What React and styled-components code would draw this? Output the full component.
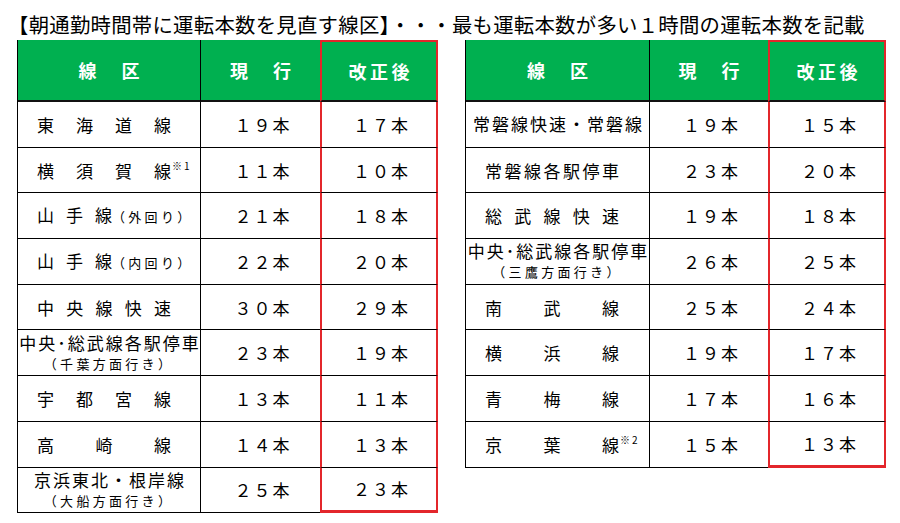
import React from 'react';
import styled, { createGlobalStyle } from 'styled-components';

const GlobalStyle = createGlobalStyle`
  body {
    margin: 0;
    background: #fff;
    color: #000;
    font-family: "Noto Sans CJK JP", "Noto Sans", sans-serif;
  }
`

const Page = styled.div`
  width: 900px;
  height: 523px;
  overflow: hidden;
`

const Title = styled.h1`
  box-sizing: border-box;
  height: 40px;
  margin: 0;
  padding: 12px 0 0 8px;
  font-size: 20.4px;
  font-weight: 400;
  letter-spacing: 0.25px;
  line-height: 24px;
  white-space: nowrap;
`

const Tables = styled.div`
  display: flex;
  align-items: flex-start;
  gap: 27px;
  padding-left: 17px;
`

const Grid = styled.div`
  display: grid;
  grid-template-columns: ${p => p.$cols};
  grid-template-rows: 62px;
  grid-auto-rows: 45.7px;
  border-left: 1px solid #000;
`

const RED = '#e3262b';

const Cell = styled.div`
  box-sizing: border-box;
  display: flex;
  flex-direction: column;
  justify-content: center;
  align-items: ${p => (p.$spread ? 'flex-start' : 'center')};
  padding-left: ${p => (p.$spread ? '19px' : '0')};
  white-space: nowrap;
  border-bottom: ${p =>
    p.$col === 2 && p.$lastRow ? `3px solid ${RED}` : p.$head ? '2px solid #111' : '1px solid #000'};
  border-right: ${p => (p.$col === 0 ? '1px solid #000' : p.$col === 2 ? `2px solid ${RED}` : 'none')};
  border-left: ${p => (p.$col === 2 ? `2px solid ${RED}` : 'none')};
  border-top: ${p => (p.$col === 2 && p.$head ? `2px solid ${RED}` : 'none')};
  background: ${p => (p.$head ? '#00b050' : '#fff')};
`

const HeadText = styled.span`
  color: #fff;
  font-weight: 700;
  font-size: 18px;
  letter-spacing: 3.5px;
  padding-left: 3.5px;
`

const NumText = styled.span`
  font-size: 17px;
  letter-spacing: 2px;
  padding-left: 5px;
`

const NameText = styled.span`
  font-size: 17px;
  letter-spacing: 2px;
  line-height: 22px;
  padding-left: 2px;
`

const SubText = styled.span`
  font-size: 13px;
  letter-spacing: 3.3px;
  line-height: ${p => (p.$inline ? '21px' : '20px')};
`

const Spread = styled.div`
  display: flex;
  justify-content: ${p => (p.$gap ? 'flex-start' : 'space-between')};
  align-items: baseline;
  gap: ${p => p.$gap || 0}px;
  width: ${p => p.$width}px;
  font-size: 17px;
  line-height: 21px;
`

const Char = styled.span`
  position: relative;
`

const Note = styled.sup`
  position: absolute;
  left: 100%;
  top: 1px;
  margin-left: 1px;
  font-size: 10px;
  line-height: 1;
  letter-spacing: 2px;
`

const toWide = n => String(n).replace(/\d/g, d => String.fromCharCode(d.charCodeAt(0) + 0xfee0)) + '本';

const left = [
  { spread: ['東', '海', '道', '線'], now: 19, next: 17 },
  { spread: ['横', '須', '賀', '線'], note: '※1', now: 11, next: 10 },
  { spread: ['山', '手', '線'], gap: 12, sub: '（外回り）', now: 21, next: 18 },
  { spread: ['山', '手', '線'], gap: 12, sub: '（内回り）', now: 22, next: 20 },
  { spread: ['中', '央', '線', '快', '速'], now: 30, next: 29 },
  { name: '中央･総武線各駅停車', line2: '（千葉方面行き）', now: 23, next: 19 },
  { spread: ['宇', '都', '宮', '線'], now: 13, next: 11 },
  { spread: ['高', '崎', '線'], now: 14, next: 13 },
  { name: '京浜東北・根岸線', line2: '（大船方面行き）', now: 25, next: 23 },
];

const right = [
  { name: '常磐線快速・常磐線', now: 19, next: 15 },
  { spread: ['常', '磐', '線', '各', '駅', '停', '車'], now: 23, next: 20 },
  { spread: ['総', '武', '線', '快', '速'], now: 19, next: 18 },
  { name: '中央･総武線各駅停車', line2: '（三鷹方面行き）', now: 26, next: 25 },
  { spread: ['南', '武', '線'], now: 25, next: 24 },
  { spread: ['横', '浜', '線'], now: 19, next: 17 },
  { spread: ['青', '梅', '線'], now: 17, next: 16 },
  { spread: ['京', '葉', '線'], note: '※2', now: 15, next: 13 },
];

function LineName({ row }) {
  if (row.spread) {
    const lastIdx = row.spread.length - 1;
    return (
      <Spread $width={134} $gap={row.gap}>
        {row.spread.map((c, i) => (
          <Char key={i}>
            {c}
            {i === lastIdx && row.sub && <SubText $inline>{row.sub}</SubText>}
            {i === lastIdx && row.note && <Note>{row.note}</Note>}
          </Char>
        ))}
      </Spread>
    );
  }
  return (
    <>
      <NameText>{row.name}</NameText>
      {row.line2 && <SubText>{row.line2}</SubText>}
    </>
  );
}

function Table({ rows, cols }) {
  const lastRow = rows.length - 1;
  return (
    <Grid $cols={cols}>
      <Cell $head $col={0}><HeadText>線　区</HeadText></Cell>
      <Cell $head $col={1}><HeadText>現　行</HeadText></Cell>
      <Cell $head $col={2}><HeadText>改正後</HeadText></Cell>
      {rows.map((row, i) => (
        <React.Fragment key={i}>
          <Cell $col={0} $spread={!!row.spread}>
            <LineName row={row} />
          </Cell>
          <Cell $col={1}><NumText>{toWide(row.now)}</NumText></Cell>
          <Cell $col={2} $lastRow={i === lastRow}><NumText>{toWide(row.next)}</NumText></Cell>
        </React.Fragment>
      ))}
    </Grid>
  );
}

export default function App() {
  return (
    <Page>
      <GlobalStyle />
      <Title>【朝通勤時間帯に運転本数を見直す線区】・・・最も運転本数が多い１時間の運転本数を記載</Title>
      <Tables>
        <Table rows={left} cols="183px 119px 118px" />
        <Table rows={right} cols="184px 118px 118px" />
      </Tables>
    </Page>
  );
}
